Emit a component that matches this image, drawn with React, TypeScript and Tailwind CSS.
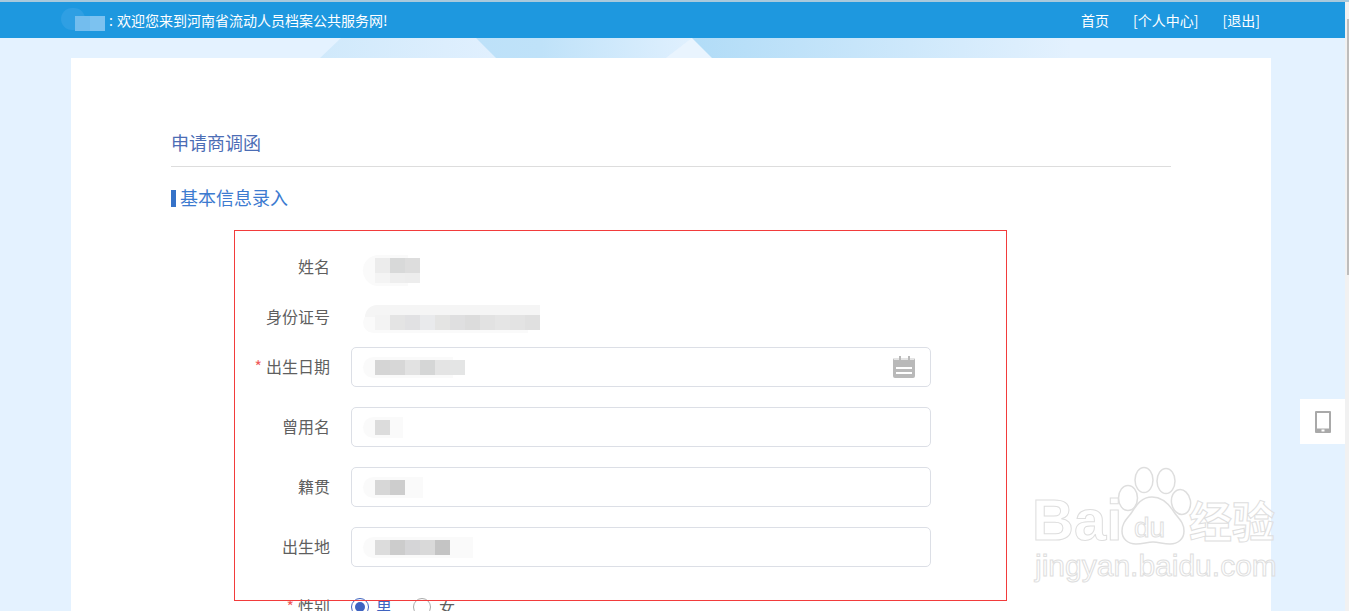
import React from "react";

const cjk = "font-['Noto_Sans_CJK_SC','Liberation_Sans',sans-serif]";

// pixelated patches that hide personal data in the screenshot
const Mosaic = ({
  cells,
  below,
  band,
  smear = "w-full",
}: {
  cells: string[];
  below?: string[];
  band?: boolean;
  smear?: string;
}) => (
  <div className="relative">
    <div className={`absolute -left-[12px] -top-[3px] -bottom-[3px] rounded-l-full rounded-r-[40%] bg-[#fafafa] ${smear}`} />
    {band && <div className="absolute -left-[10px] right-0 -top-[10px] h-[12px] rounded-tl-full bg-[#f5f5f5]" />}
    <div className="relative flex">
      {cells.map((c, i) => (
        <div key={i} className="w-[15px] h-[15px]" style={{ background: c }} />
      ))}
    </div>
    {below && (
      <div className="relative flex">
        {below.map((c, i) => (
          <div key={i} className="w-[15px] h-[10px]" style={{ background: c }} />
        ))}
      </div>
    )}
  </div>
);

const CalendarIcon = () => (
  <svg width="24" height="25" viewBox="0 0 24 25" className="absolute right-[14px] top-[7px]">
    <path d="M3 3h18a2 2 0 0 1 2 2v16a2 2 0 0 1-2 2H3a2 2 0 0 1-2-2V5a2 2 0 0 1 2-2z" fill="#b9b9b9" />
    <rect x="2" y="3" width="20" height="2" fill="#e4e4e4" />
    <rect x="7" y="1" width="2" height="5" fill="#b9b9b9" />
    <rect x="16" y="1" width="2" height="5" fill="#b9b9b9" />
    <rect x="4" y="12" width="16" height="2" fill="#fff" />
    <rect x="4" y="17" width="16" height="2" fill="#fff" />
  </svg>
);

const Row = ({ label, required, children }: { label: string; required?: boolean; children?: React.ReactNode }) => (
  <div className="flex items-center h-10 mb-5">
    <div className="w-[159px] pb-[2px] text-right text-base text-[#5f5f5f]">
      {required && <span className="text-[#ef5b5b] mr-[4px]">*</span>}
      {label}
    </div>
    <div className="ml-[21px] flex-1">{children}</div>
  </div>
);

const Field = ({ children }: { children?: React.ReactNode }) => (
  <div className="relative w-[580px] h-10 border border-[#dcdfe6] rounded-[5px] bg-white pl-[23px] flex items-center">
    {children}
  </div>
);

const Banner = () => (
  <svg width="1345" height="20" viewBox="0 0 1345 20" className="absolute left-0 top-0">
    <defs>
      <linearGradient id="a">
        <stop offset="0" stopColor="#d0e9fb" />
        <stop offset="1" stopColor="#e1f0fe" />
      </linearGradient>
      <linearGradient id="b">
        <stop offset="0" stopColor="#bde1f9" />
        <stop offset="0.3" stopColor="#bfe2f9" />
        <stop offset="1" stopColor="#e0f0fe" />
      </linearGradient>
      <linearGradient id="c">
        <stop offset="0" stopColor="#b1dcf7" />
        <stop offset="1" stopColor="#e3f1fe" />
      </linearGradient>
    </defs>
    <polygon points="341,0 320,20 497,20 476,0" fill="url(#a)" />
    <polygon points="476,0 496,20 666,20 692,0" fill="url(#b)" />
    <polygon points="666,20 692,0 712,20" fill="#e9f4fe" />
    <polygon points="692,0 712,20 1070,20 1070,0" fill="url(#c)" />
  </svg>
);

const Watermark = () => (
  <div className="absolute left-[1034px] top-[463px] w-[245px] h-[122px] pointer-events-none">
    <svg width="245" height="122" viewBox="0 0 245 122" className="absolute left-0 top-0" fill="#ffffff" fillOpacity="0.4" stroke="#dedede" strokeWidth="1.500">
      <ellipse cx="94" cy="33" rx="9.500" ry="12.500" />
      <ellipse cx="110" cy="15" rx="9" ry="12.500" />
      <ellipse cx="132" cy="16" rx="9" ry="12.500" />
      <ellipse cx="147" cy="37" rx="9.500" ry="12.500" transform="rotate(-10 147 37)" />
      <path d="M118 32c-10 0-15 7-20 15-4 6-10 10-10 19 0 8 6 13 14 13 7 0 11-2 17-2s10 2 17 2c8 0 14-5 14-13 0-9-6-13-10-19-5-8-12-15-22-15z" />
    </svg>
    <span className="absolute -left-[2px] top-[20px] text-[58px] leading-[70px] font-bold font-['Liberation_Sans',sans-serif] text-white/40 [-webkit-text-stroke:1px_#dedede]">
      Bai
    </span>
    <span className="absolute left-[100px] top-[43px] text-[28px] leading-[40px] font-['Liberation_Sans',sans-serif] text-white/40 [-webkit-text-stroke:1px_#dedede]">
      du
    </span>
    <span className={`absolute left-[155px] top-[24px] text-[43px] leading-[60px] font-bold text-white/40 [-webkit-text-stroke:1px_#dedede] ${cjk}`}>
      经验
    </span>
    <span className="absolute left-[1px] top-[81px] text-[30px] leading-[40px] font-['Liberation_Sans',sans-serif] text-white/40 [-webkit-text-stroke:1px_#dedede]">
      jingyan.baidu.com
    </span>
  </div>
);

export default function App() {
  return (
    <div className={`h-screen overflow-hidden flex flex-col bg-[#e4f2ff] ${cjk}`}>
      <div className="h-[2px] bg-[#a9c9dc]" />
      <div className="flex-1 flex min-h-0">
        <div className="flex-1 relative overflow-hidden">
          <header className="h-9 bg-[#1e98df] text-white text-sm flex items-center justify-between pl-[75px] pr-[85px]">
            <div className="flex items-center">
              <div className="relative flex mt-[6px]">
                <div className="absolute -left-[14px] -top-[8px] w-[24px] h-[22px] rounded-full bg-[#2f9fe3]" />
                <div className="relative w-[15px] h-[15px] bg-[#73bdee]" />
                <div className="relative w-[15px] h-[15px] bg-[#7cc2f0]" />
              </div>
              <span className="ml-[4px]">:</span>
              <span className="ml-[4px]">欢迎您来到河南省流动人员档案公共服务网!</span>
            </div>
            <nav className="flex gap-[24px]">
              <span>首页</span>
              <span>[个人中心]</span>
              <span>[退出]</span>
            </nav>
          </header>

          <div className="relative pt-5">
            <Banner />
            <main className="relative ml-[71px] w-[1200px] bg-white px-[100px] pb-10">
              <div className="pt-[72px] pb-[11px] text-lg leading-[25px] text-[#4c6db5] border-b border-[#dddddd]">申请商调函</div>
              <div className="mt-[18px] h-[26px] flex items-center text-lg text-[#3d7bd0]">
                <div className="w-[5px] h-[17px] bg-[#3572c8] mr-1" />
                <span className="pb-[2px]">基本信息录入</span>
              </div>

              <div className="mt-[31px]">
                <div className="flex items-center h-[50px]">
                  <div className="w-[159px] pb-[2px] text-right text-base text-[#5f5f5f]">姓名</div>
                  <div className="ml-[45px] pt-[6px]">
                    <Mosaic cells={["#ececec", "#d8d9d9", "#dddddd"]} below={["#f4f4f4", "#eeeeee", "#ededed"]} />
                  </div>
                </div>
                <div className="flex items-center h-[50px]">
                  <div className="w-[159px] pb-[2px] text-right text-base text-[#5f5f5f]">身份证号</div>
                  <div className="ml-[45px] pt-[10px]">
                    <Mosaic
                      band
                      cells={["#f3f3f3", "#e4e4e4", "#e1e1e3", "#e9eaec", "#e4e4e3", "#dfdfe0", "#dcdcdc", "#e2e2e2", "#e5e5e5", "#e3e3e3", "#e0e0e0"]}
                    />
                  </div>
                </div>
                <div className="h-[5px]" />
                <Row label="出生日期" required>
                  <Field>
                    <Mosaic cells={["#d5d5d5", "#d7d7d7", "#e2e2e2", "#d5d6d6", "#e4e4e4", "#e4e5e5"]} />
                    <CalendarIcon />
                  </Field>
                </Row>
                <Row label="曾用名">
                  <Field>
                    <Mosaic cells={["#dcdcdc"]} smear="w-[40px]" />
                  </Field>
                </Row>
                <Row label="籍贯">
                  <Field>
                    <Mosaic cells={["#d7d7d7", "#cdcdcd"]} smear="w-[60px]" />
                  </Field>
                </Row>
                <Row label="出生地">
                  <Field>
                    <Mosaic cells={["#dcdcdc", "#cccccc", "#d5d5d7", "#d9d9d9", "#c4c4c4"]} smear="w-[110px]" />
                  </Field>
                </Row>
                <Row label="性别" required>
                  <div className="flex items-center text-base">
                    <span className="w-[18px] h-[18px] rounded-full border border-[#3f63c0] flex items-center justify-center">
                      <span className="w-[10px] h-[10px] rounded-full bg-[#3f63c0]" />
                    </span>
                    <span className="ml-[7px] mr-[1px] text-[#3f63c0]">男</span>
                    <span className="ml-[20px] w-[18px] h-[18px] rounded-full border border-[#aaaaaa]" />
                    <span className="ml-[8px] text-[#5f5f5f]">女</span>
                  </div>
                </Row>
              </div>
            </main>
          </div>

          {/* red annotation frame from the screenshot */}
          <div className="absolute left-[234px] top-[228px] w-[773px] h-[371px] border border-[#f23b3b] pointer-events-none" />

          <div className="absolute right-0 top-[397px] w-[45px] h-[45px] bg-white flex items-center justify-center">
            <svg width="16" height="22" viewBox="0 0 16 22">
              <rect x="0" y="0" width="16" height="22" rx="1" fill="#a9a9a9" />
              <rect x="2" y="2" width="12" height="15.500" fill="#fff" />
              <rect x="6.500" y="18.500" width="3" height="2" fill="#fff" />
            </svg>
          </div>

          <Watermark />
        </div>

        <div className="w-1 bg-[#f1f1f1] flex justify-end pt-[17px]">
          <div className="w-[2px] h-[256px] bg-[#bdbdbd]" />
        </div>
      </div>
    </div>
  );
}
